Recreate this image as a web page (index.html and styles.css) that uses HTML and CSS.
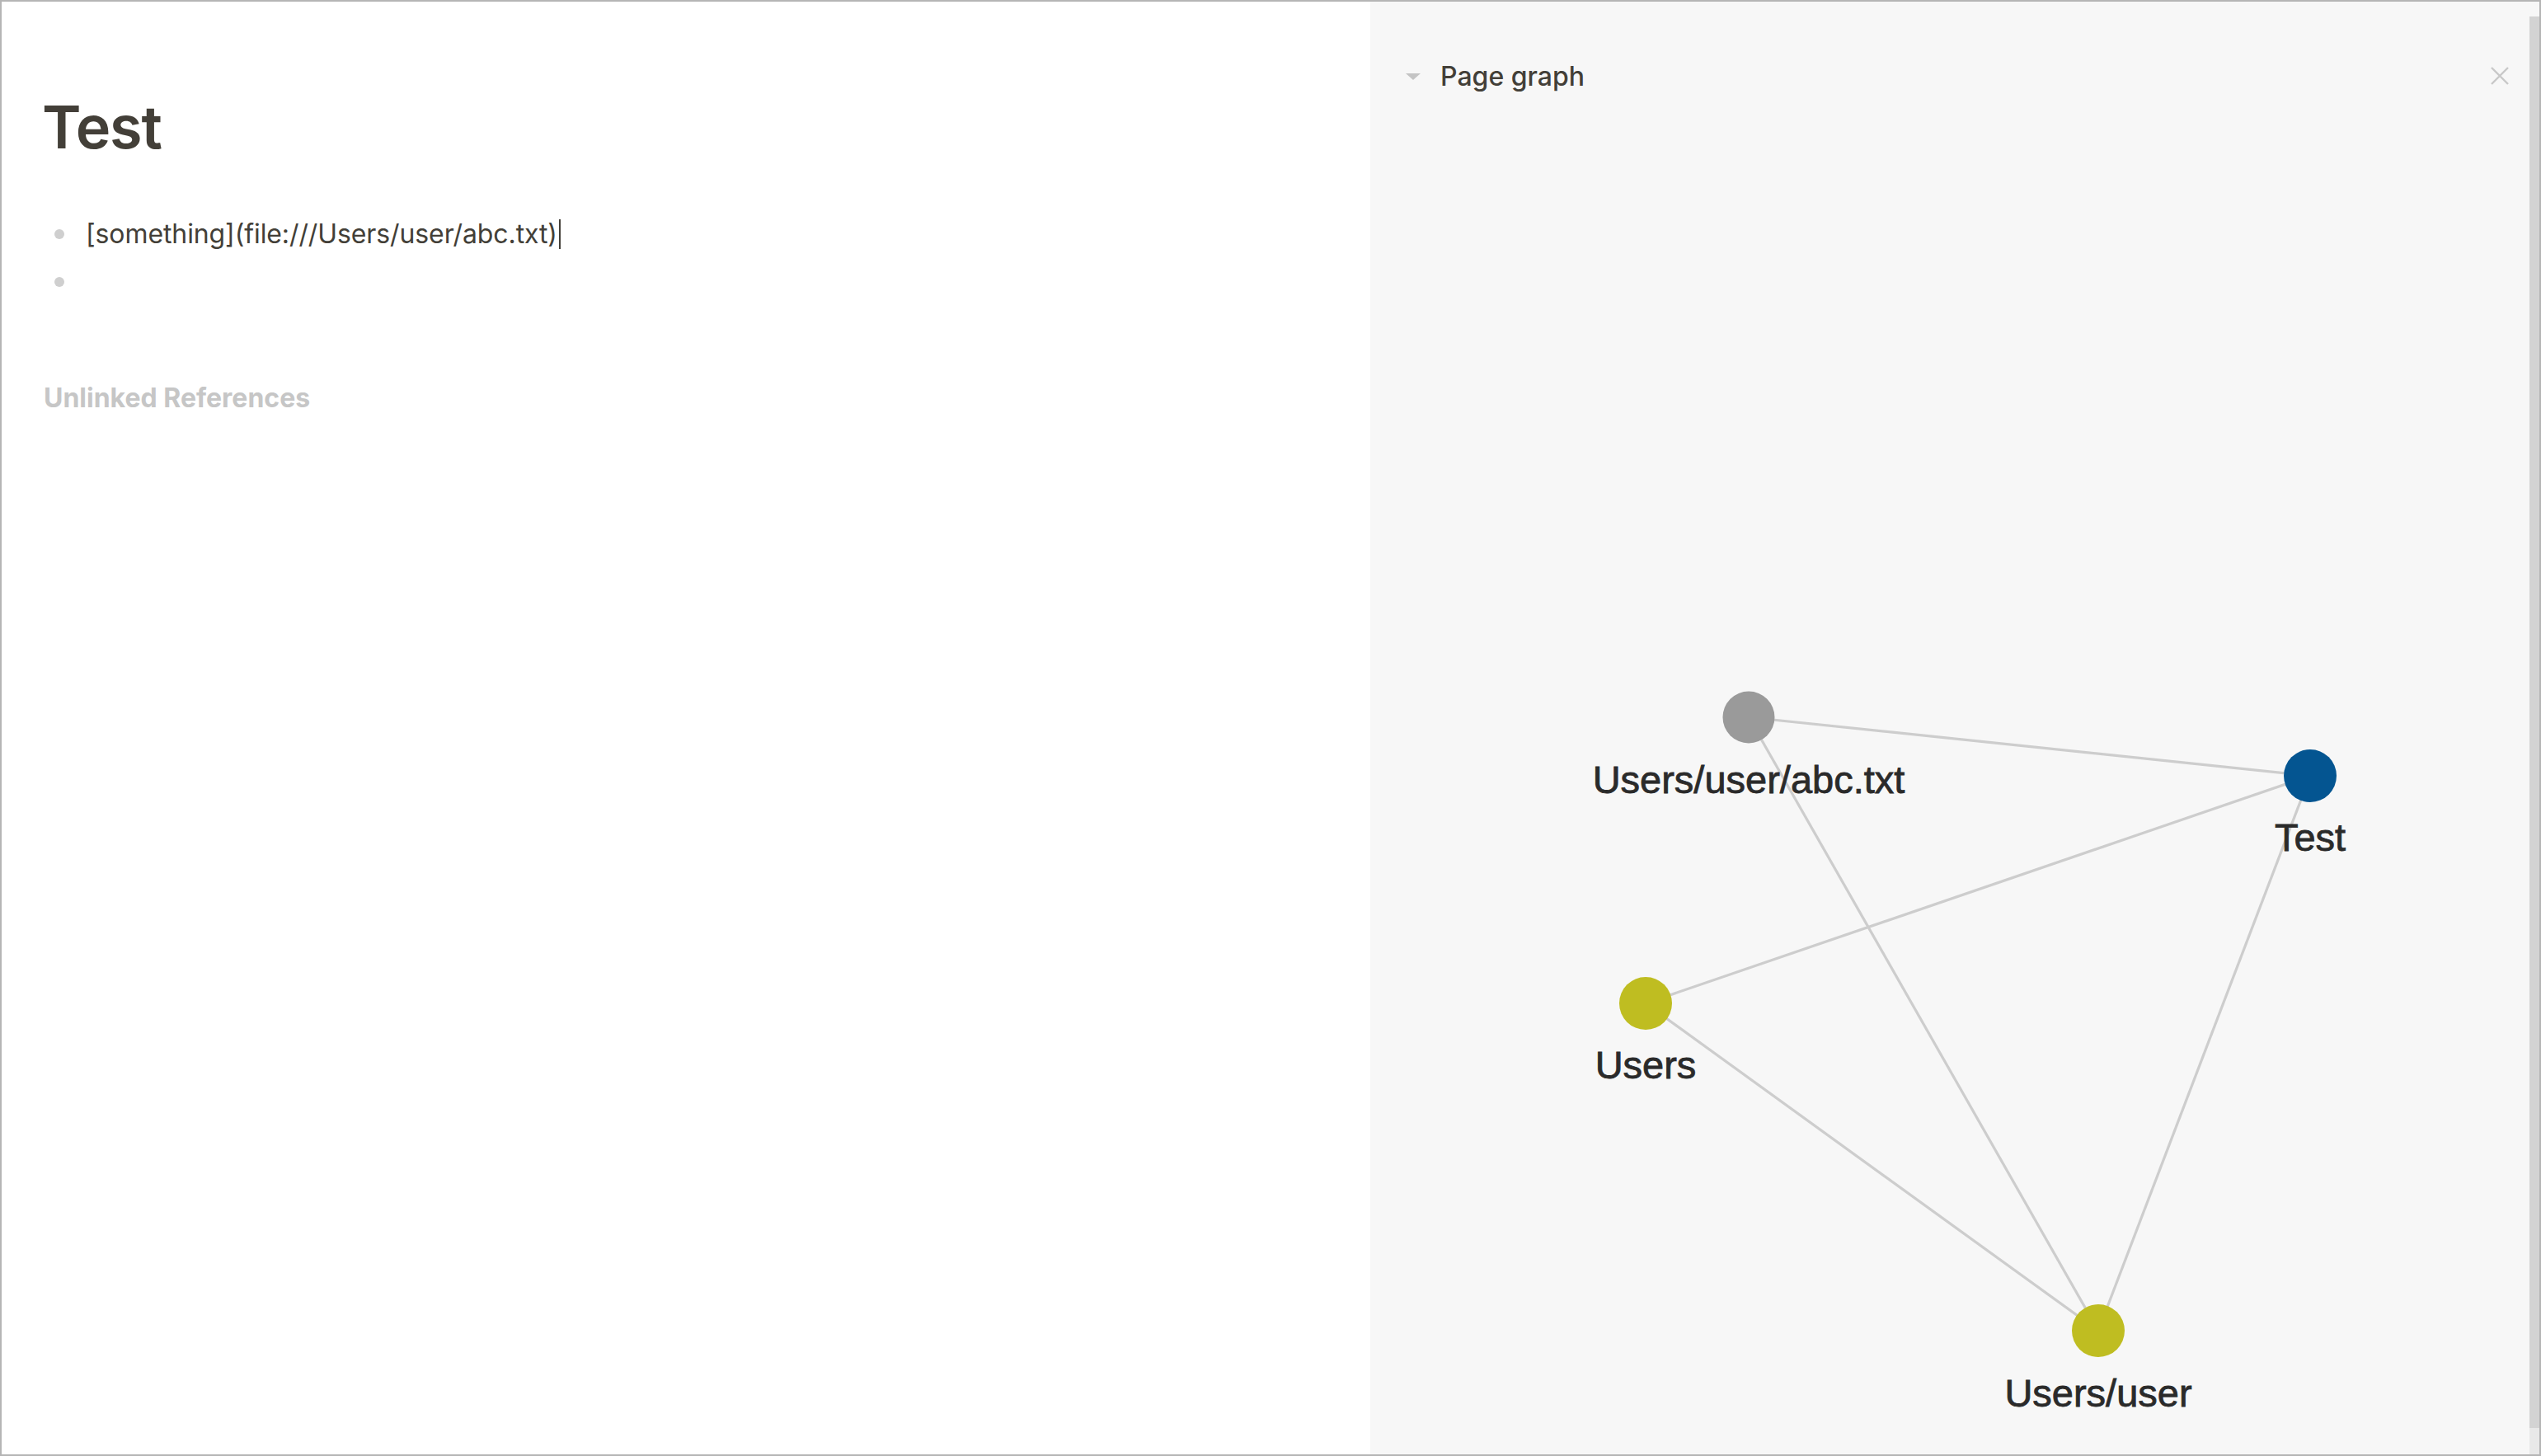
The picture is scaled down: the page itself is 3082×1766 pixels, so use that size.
FILE: index.html
```html
<!DOCTYPE html>
<html>
<head>
<meta charset="utf-8">
<link rel="stylesheet" href="styles.css">
</head>
<body>
<div class="frame">
  <main class="page">
    <h1 class="title">Test</h1>
    <div class="blocks">
      <div class="block">
        <span class="bullet"></span>
        <span class="content">[something](file:///Users/user/abc.txt)<span class="caret"></span></span>
      </div>
      <div class="block">
        <span class="bullet"></span>
        <span class="content"></span>
      </div>
    </div>
    <div class="refs">Unlinked References</div>
  </main>
  <aside class="sidebar">
    <div class="sidebar-body">
      <div class="sb-header">
        <span class="toggle"></span>
        <span class="sb-title">Page graph</span>
        <svg class="close" width="22" height="22" viewBox="0 0 22 22"><path d="M1 1L21 21M21 1L1 21" stroke="#c8c8c8" stroke-width="2.4" fill="none"/></svg>
      </div>
      <svg class="graph" width="1406" height="1614" viewBox="1662 150 1406 1614">
        <g stroke="#cdcdcd" stroke-width="3.2">
          <line x1="2121" y1="870" x2="2802" y2="941"/>
          <line x1="2121" y1="870" x2="2545" y2="1614"/>
          <line x1="2802" y1="941" x2="1996" y2="1217"/>
          <line x1="2802" y1="941" x2="2545" y2="1614"/>
          <line x1="1996" y1="1217" x2="2545" y2="1614"/>
        </g>
        <circle cx="2121" cy="870" r="31.5" fill="#9a9a9a"/>
        <circle cx="2802" cy="941" r="32" fill="#045591"/>
        <circle cx="1996" cy="1217" r="32" fill="#bfbd21"/>
        <circle cx="2545" cy="1614" r="32" fill="#bfbd21"/>
        <g class="labels" text-anchor="middle">
          <text x="2121" y="962">Users/user/abc.txt</text>
          <text x="2802" y="1032">Test</text>
          <text x="1996" y="1308">Users</text>
          <text x="2545" y="1706">Users/user</text>
        </g>
      </svg>
    </div>
    <div class="scrollbar">
      <div class="thumb"></div>
      <div class="track-end"></div>
    </div>
  </aside>
</div>
</body>
</html>
```
FILE: styles.css
```css
html, body {
  margin: 0;
  padding: 0;
  width: 3082px;
  height: 1766px;
  overflow: hidden;
}
.frame {
  box-sizing: border-box;
  width: 3082px;
  height: 1766px;
  border: 2px solid #b5b5b5;
  display: flex;
  background: #ffffff;
}
.page {
  width: 1660px;
  flex: none;
  box-sizing: border-box;
  padding: 107px 0 0 49px;
  font-family: Inter, "Noto Sans", sans-serif;
  color: #433f38;
}
.title {
  margin: 0;
  font-size: 72px;
  line-height: 89px;
  font-weight: 600;
  letter-spacing: -1.2px;
}
.blocks {
  margin-top: 57px;
  padding-left: 15px;
}
.block {
  display: flex;
  align-items: center;
  padding: 5px 0;
  height: 48px;
}
.bullet {
  width: 12px;
  height: 12px;
  border-radius: 50%;
  background: #cfcfcf;
  flex: none;
}
.content {
  margin-left: 26px;
  font-size: 32px;
  line-height: 48px;
  letter-spacing: -0.1px;
  white-space: nowrap;
  display: flex;
  align-items: center;
}
.caret {
  display: inline-block;
  width: 2px;
  height: 36px;
  background: #433f38;
  margin-left: 2px;
}
.refs {
  margin-top: 89px;
  padding-left: 2px;
  font-size: 32px;
  line-height: 46px;
  font-weight: 700;
  color: #c6c6c6;
}
.sidebar {
  flex: 1;
  display: flex;
  background: #f7f7f7;
}
.sidebar-body {
  width: 1406px;
  display: flex;
  flex-direction: column;
  font-family: Inter, "Noto Sans", sans-serif;
}
.sb-header {
  height: 148px;
  box-sizing: border-box;
  padding: 67px 25px 0 43px;
  display: flex;
  align-items: flex-start;
}
.toggle {
  width: 0;
  height: 0;
  border-left: 9px solid transparent;
  border-right: 9px solid transparent;
  border-top: 8px solid #c4c4c4;
  margin-top: 20px;
}
.sb-title {
  margin-left: 24px;
  font-size: 32px;
  line-height: 48px;
  font-weight: 500;
  color: #433f38;
  flex: 1;
}
.close {
  margin-top: 12px;
}
.graph {
  display: block;
}
.labels {
  font-family: "Liberation Sans", Arial, sans-serif;
  font-size: 47px;
  fill: #2a2a2a;
  stroke: #2a2a2a;
  stroke-width: 0.8px;
}
.scrollbar {
  width: 12px;
  display: flex;
  flex-direction: column;
  padding-top: 18px;
}
.thumb {
  flex: 1;
  background: #d3d3d3;
}
.track-end {
  height: 32px;
  background: #e8e8e8;
}
```
